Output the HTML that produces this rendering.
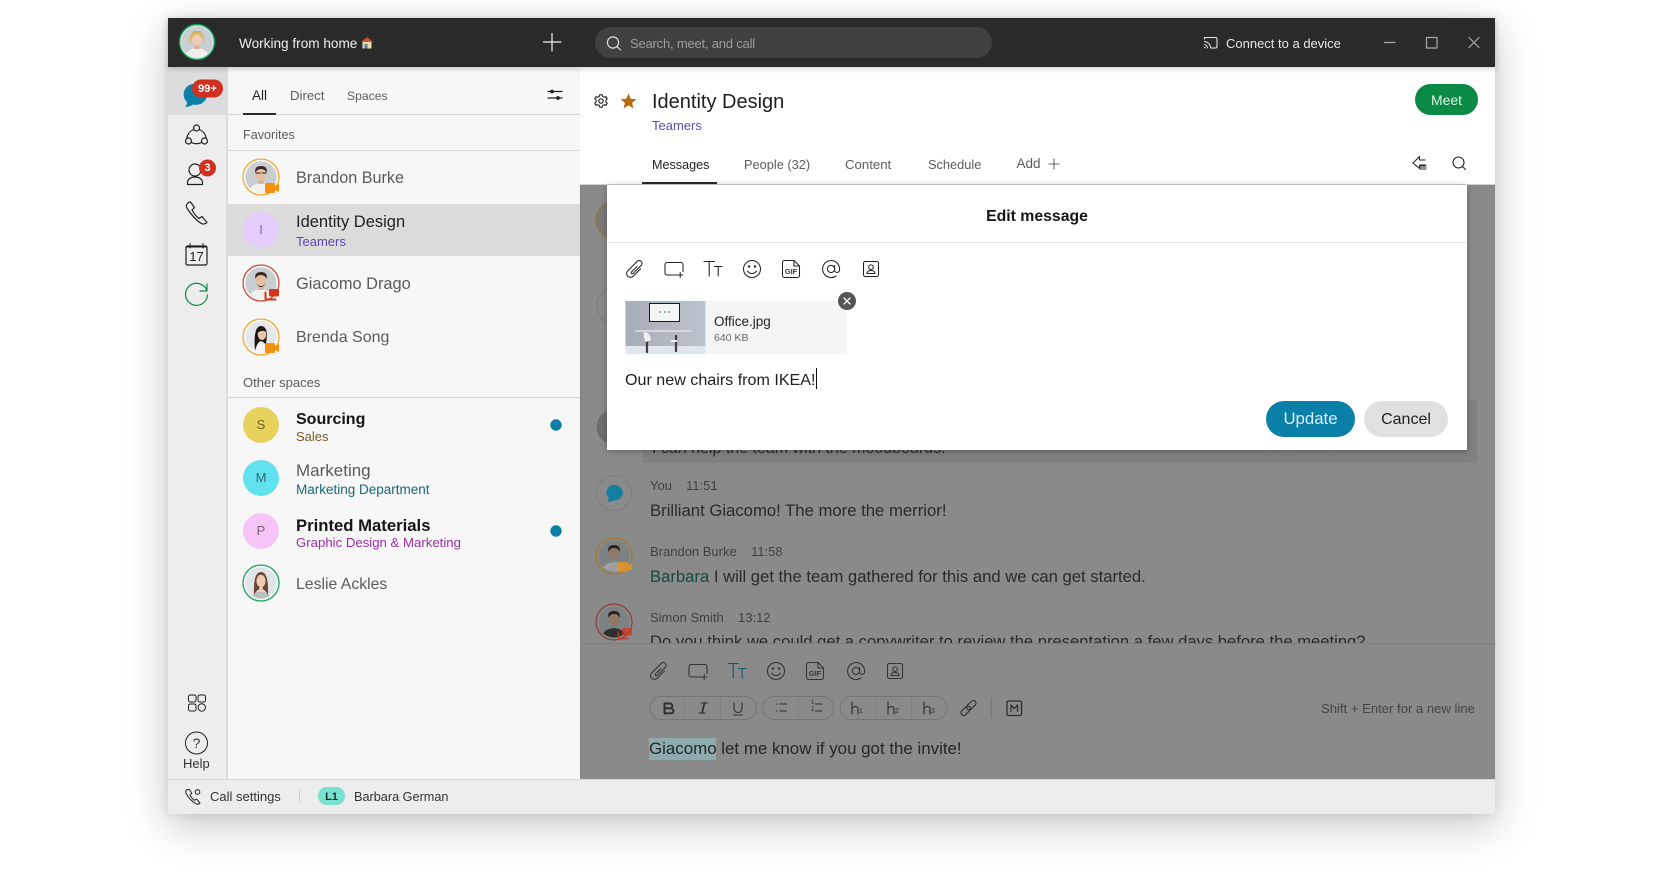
<!DOCTYPE html>
<html><head><meta charset="utf-8"><style>
html,body{margin:0;padding:0;background:#fff;width:1664px;height:880px;overflow:hidden;font-family:"Liberation Sans","DejaVu Sans",sans-serif}
.b{position:absolute}
.t{position:absolute;white-space:nowrap;line-height:20px;height:20px}
svg{position:absolute;left:0;top:0}
</style></head><body>
<div class="b" style="left:168px;top:18px;width:1327px;height:796px;box-shadow:0 12px 40px rgba(0,0,0,.22),0 0 10px rgba(0,0,0,.1)"></div>
<div class="b" style="left:168px;top:66px;width:58px;height:713px;background:#ededed"></div>
<div class="b" style="left:168px;top:66px;width:58px;height:49px;background:#ddd"></div>
<div class="b" style="left:226px;top:66px;width:2px;height:713px;background:#dedede"></div>
<div class="b" style="left:228px;top:66px;width:352px;height:713px;background:#f7f7f7"></div>
<div class="b" style="left:228px;top:114px;width:352px;height:1px;background:#d8d8d8"></div>
<div class="b" style="left:243px;top:113px;width:33px;height:2px;background:#2a2a2a"></div>
<div class="b" style="left:228px;top:150px;width:352px;height:1px;background:#d8d8d8"></div>
<div class="b" style="left:228px;top:204px;width:352px;height:52px;background:#dcdcdc"></div>
<div class="b" style="left:228px;top:397px;width:352px;height:1px;background:#d8d8d8"></div>
<div class="b" style="left:580px;top:66px;width:915px;height:119px;background:#fff"></div>
<div class="b" style="left:580px;top:184px;width:915px;height:1px;background:#d0d0d0"></div>
<div class="b" style="left:642px;top:182px;width:75px;height:2px;background:#2a2a2a"></div>
<div class="b" style="left:580px;top:185px;width:915px;height:594px;background:#8a8a8a;border-left:1px solid #848484;box-sizing:border-box"></div>
<div class="b" style="left:643px;top:400px;width:834px;height:63px;background:#808080"></div>
<div class="b" style="left:168px;top:18px;width:1327px;height:48.5px;background:#2a2a2a;box-shadow:0 2px 5px rgba(0,0,0,.18)"></div>
<div class="b" style="left:595px;top:27px;width:397px;height:31px;border-radius:16px;background:#404040"></div>
<div class="b" style="left:168px;top:779px;width:1327px;height:35px;background:#ededed;border-top:1px solid #d8d8d8;box-sizing:border-box"></div>

<!-- title bar text -->
<div class="t" style="left:239px;top:34px;font-size:13.6px;color:#eee">Working from home</div>
<div class="t" style="left:630px;top:34px;font-size:13px;letter-spacing:-.2px;color:#9c9c9c">Search, meet, and call</div>
<div class="t" style="left:1226px;top:34px;font-size:13px;color:#e6e6e6">Connect to a device</div>

<!-- list text -->
<div class="t" style="left:252px;top:86px;font-size:13.5px;color:#222">All</div>
<div class="t" style="left:290px;top:86px;font-size:13.2px;color:#5c5c5c">Direct</div>
<div class="t" style="left:347px;top:86px;font-size:12.2px;color:#5c5c5c">Spaces</div>
<div class="t" style="left:243px;top:125px;font-size:12.6px;color:#5a5a5a">Favorites</div>
<div class="t" style="left:296px;top:168px;font-size:16.2px;color:#5a5a5a">Brandon Burke</div>
<div class="t" style="left:296px;top:212px;font-size:16.5px;color:#222">Identity Design</div>
<div class="t" style="left:296px;top:232px;font-size:13px;color:#6048b8">Teamers</div>
<div class="t" style="left:296px;top:274px;font-size:16.4px;color:#5a5a5a">Giacomo Drago</div>
<div class="t" style="left:296px;top:328px;font-size:16px;color:#5a5a5a">Brenda Song</div>
<div class="t" style="left:243px;top:373px;font-size:13px;color:#5a5a5a">Other spaces</div>
<div class="t" style="left:296px;top:410px;font-size:16px;font-weight:700;color:#151515">Sourcing</div>
<div class="t" style="left:296px;top:427px;font-size:13px;color:#7a5a20">Sales</div>
<div class="t" style="left:296px;top:461px;font-size:17px;color:#5a5a5a">Marketing</div>
<div class="t" style="left:296px;top:480px;font-size:13.5px;color:#17677a">Marketing Department</div>
<div class="t" style="left:296px;top:516px;font-size:16.7px;font-weight:700;color:#151515">Printed Materials</div>
<div class="t" style="left:296px;top:533px;font-size:13.2px;color:#9a2fa8">Graphic Design &amp; Marketing</div>
<div class="t" style="left:296px;top:575px;font-size:15.8px;color:#5a5a5a">Leslie Ackles</div>
<div class="t" style="left:183px;top:754px;font-size:13px;color:#333">Help</div>
<div class="t" style="left:210px;top:787px;font-size:13px;color:#333">Call settings</div>
<div class="t" style="left:354px;top:787px;font-size:12.7px;color:#333">Barbara German</div>
<div class="b" style="left:318px;top:787px;width:27px;height:18px;border-radius:9px;background:#78e2cf"></div>
<div class="t" style="left:318px;top:788px;width:27px;text-align:center;font-size:11px;font-weight:700;color:#1c2b28;line-height:19px">L1</div>

<!-- header text -->
<div class="t" style="left:652px;top:92px;font-size:20px;color:#1e1e1e">Identity Design</div>
<div class="t" style="left:652px;top:116px;font-size:13px;color:#6048b8">Teamers</div>
<div class="t" style="left:652px;top:155px;font-size:12.6px;color:#222">Messages</div>
<div class="t" style="left:744px;top:155px;font-size:12.8px;color:#5c5c5c">People (32)</div>
<div class="t" style="left:845px;top:155px;font-size:13.2px;color:#5c5c5c">Content</div>
<div class="t" style="left:928px;top:155px;font-size:12.8px;color:#5c5c5c">Schedule</div>
<div class="t" style="left:1016.5px;top:154px;font-size:13.5px;color:#5c5c5c">Add</div>
<div class="b" style="left:1415px;top:84px;width:63px;height:31px;border-radius:16px;background:#0b8a45"></div>
<div class="t" style="left:1415px;top:90px;width:63px;text-align:center;font-size:14px;color:#d8f3e2">Meet</div>

<!-- messages -->
<div class="t" style="left:652px;top:439px;font-size:16px;color:#2a2a2a">I can help the team with the moodboards.</div>
<div class="t" style="left:650px;top:476px;font-size:13px;color:#404040">You</div>
<div class="t" style="left:686px;top:476px;font-size:13px;color:#404040">11:51</div>
<div class="t" style="left:650px;top:501px;font-size:16.7px;color:#2a2a2a">Brilliant Giacomo! The more the merrior!</div>
<div class="t" style="left:650px;top:542px;font-size:13px;color:#404040">Brandon Burke</div>
<div class="t" style="left:751px;top:542px;font-size:13px;color:#404040">11:58</div>
<div class="t" style="left:650px;top:567px;font-size:16.65px;color:#2a2a2a"><span style="color:#14493d">Barbara</span> I will get the team gathered for this and we can get started.</div>
<div class="t" style="left:650px;top:608px;font-size:13px;color:#404040">Simon Smith</div>
<div class="t" style="left:738px;top:608px;font-size:13px;color:#404040">13:12</div>
<div class="t" style="left:650px;top:632px;font-size:16.62px;color:#2a2a2a">Do you think we could get a copywriter to review the presentation a few days before the meeting?</div>

<!-- avatars behind in messages + compose -->
<svg width="1664" height="880" viewBox="0 0 1664 880">
<defs>
<clipPath id="c"><circle r="15.6"/></clipPath>
<g id="fm"><circle r="15.6" fill="#c9ced2"/><g clip-path="url(#c)"><path d="M-13 16Q-11 7 0 6Q11 7 13 16Z" fill="#f0f0ee"/><rect x="-2.5" y="1" width="5" height="6" fill="#d9b094"/><ellipse cy="-3" rx="5.4" ry="7" fill="#e4bfa4"/><path d="M-5.6 -4Q-7 -11 0 -11Q7 -11 5.6 -4Q4 -8 0 -8Q-4 -8 -5.6 -4Z" fill="#3b2b22"/></g></g>
<g id="cam"><rect x="4" y="6" width="10" height="10" rx="1.5" fill="#f7920f"/><path d="M14 9l4-2v8l-4-2z" fill="#f7920f"/></g>
<g id="shr"><rect x="8" y="6" width="10" height="7.5" rx="1.2" fill="#d4351c"/><path d="M4.500 9.500v6a1 1 0 0 0 1 1h9" fill="none" stroke="#d4351c" stroke-width="2"/></g>
</defs>
<!-- behind modal -->
<circle cx="614" cy="220" r="18" fill="#7a7a7a" stroke="#94733a" stroke-width="1.2"/>
<circle cx="614" cy="306" r="17.500" fill="none" stroke="#7c7c7c"/>
<circle cx="614" cy="427" r="17.500" fill="#6e6e6e"/>
<g transform="translate(614,493)"><circle r="17.500" fill="#8a8a8a" stroke="#7c7c7c"/><path d="M0 -8a8 7.500 0 0 1 1 15.500c-2 0-5 1.500-7.500 1.500c1-1.500 1.500-3 1-4.500a8 7.500 0 0 1 5.500-12.500z" fill="#127f9e"/></g>
<g transform="translate(614,556)"><circle r="15.600" fill="#7d8285"/><g clip-path="url(#c)"><path d="M-13 16Q-11 7 0 6Q11 7 13 16Z" fill="#a0a0a0"/><ellipse cy="-3" rx="5.400" ry="7" fill="#8f7a6a"/><path d="M-5.600 -4Q-7 -11 0 -11Q7 -11 5.600 -4Q4 -8 0 -8Q-4 -8 -5.600 -4Z" fill="#2a211b"/></g><circle r="18" fill="none" stroke="#a87a23" stroke-width="1.200"/><use href="#cam" opacity=".75"/></g>
<g transform="translate(614,622)"><circle r="15.600" fill="#7d8285"/><g clip-path="url(#c)"><path d="M-13 16Q-11 7 0 6Q11 7 13 16Z" fill="#2f2f2f"/><ellipse cy="-3" rx="5.400" ry="7" fill="#8f7a6a"/><path d="M-5.600 -4Q-7 -11 0 -11Q7 -11 5.600 -4Q4 -8 0 -8Q-4 -8 -5.600 -4Z" fill="#2a211b"/></g><circle r="18" fill="none" stroke="#8e3b30" stroke-width="1.200"/><use href="#shr" opacity=".75"/></g>
</svg>

<div class="b" style="left:581px;top:643px;width:914px;height:136px;background:#8a8a8a;border-top:1px solid #7e7e7e;box-sizing:border-box"></div>
<div class="b" style="left:649px;top:738px;width:67px;height:22px;background:#8eabb0"></div>
<div class="t" style="left:649px;top:739px;font-size:16.9px;color:#262626">Giacomo <span>let me know if you got the invite!</span></div>
<div class="t" style="left:1321px;top:699px;font-size:13.1px;color:#444">Shift + Enter for a new line</div>

<!-- modal -->
<div class="b" style="left:607px;top:185px;width:860px;height:264.5px;background:#fff;box-shadow:0 1px 6px rgba(0,0,0,.3)"></div>
<div class="b" style="left:607px;top:242px;width:860px;height:1px;background:#e8e8e8"></div>
<div class="t" style="left:607px;top:207px;width:860px;text-align:center;font-size:15.8px;font-weight:700;color:#151515">Edit message</div>
<div class="b" style="left:625px;top:301px;width:222px;height:53px;background:#f5f5f5"></div>
<div class="t" style="left:714px;top:312px;font-size:13.5px;color:#222">Office.jpg</div>
<div class="t" style="left:714px;top:328px;font-size:10.5px;color:#666">640 KB</div>
<div class="t" style="left:625px;top:370px;font-size:16.1px;color:#1e1e1e">Our new chairs from IKEA!</div>
<div class="b" style="left:816px;top:368px;width:1px;height:21px;background:#111"></div>
<div class="b" style="left:1266px;top:401px;width:89px;height:36px;border-radius:18px;background:#0a7fa8"></div>
<div class="t" style="left:1266px;top:409px;width:89px;text-align:center;font-size:16.8px;color:#d6f0f7">Update</div>
<div class="b" style="left:1364px;top:401px;width:84px;height:36px;border-radius:18px;background:#e0e0e0"></div>
<div class="t" style="left:1364px;top:410px;width:84px;text-align:center;font-size:16px;color:#222">Cancel</div>

<!-- icons -->
<svg width="1664" height="880" viewBox="0 0 1664 880" fill="none" stroke-linecap="round" stroke-linejoin="round">
<defs>
<g id="i-clip"><path transform="rotate(45)" d="M3.800 -4V6.500a3.800 3.800 0 0 1-7.600 0V-7a2.800 2.800 0 0 1 5.600 0V4.500a1.100 1.100 0 0 1-2.200 0V-3"/></g>
<g id="i-img"><path d="M3 6H-7a2 2 0 0 1-2-2V-4.500a2 2 0 0 1 2-2H7a2 2 0 0 1 2 2V2.500M6.200 3.500V8.500M3.800 6H8.700"/></g>
<g id="i-tt"><path d="M-9 -7.500H1.500M-3.800 -7.500V7M1.500 -2.500H9M5.200 -2.500V7"/></g>
<g id="i-sm"><circle r="8.500"/><circle cx="-3" cy="-2.500" r=".7" fill="currentColor"/><circle cx="3" cy="-2.500" r=".7" fill="currentColor"/><path d="M-4.500 2.200Q0 6.800 4.500 2.200"/></g>
<g id="i-gif"><path d="M-8.500 -6.500a2 2 0 0 1 2-2H3L8.500 -3V6.500a2 2 0 0 1-2 2H-6.500a2 2 0 0 1-2-2ZM3 -8.500V-3H8.500"/></g>
<g id="i-at"><circle cy="0" r="3.600"/><path d="M3.600 -3.500V1a2.500 2.500 0 0 0 5 0V0a8.500 8.500 0 1 0-3.500 6.900"/></g>
<g id="i-ct"><rect x="-7.500" y="-7.500" width="15" height="15" rx="1.800"/><circle cy="-1.800" r="2.300"/><path d="M-4 4.500c0-2.200 1.500-3 4-3s4 .8 4 3Z"/></g>
</defs>

<!-- title bar -->
<circle cx="197" cy="42" r="17.500" fill="#dfe3e5" stroke="#0c9a52" stroke-width="1.400"/>
<g transform="translate(197,42)"><use href="#fm"/><ellipse cy="-3" rx="5.300" ry="6.800" fill="#f0ccb4"/><path d="M-7 2Q-8.500 -11 0 -11Q8.500 -11 7 2Q5.500 -7 0 -7.500Q-5.500 -7 -7 2Z" fill="#dbb664"/></g>
<g transform="translate(367,43)"><path d="M-6 -1L0 -6L6 -1Z" fill="#c9572c"/><rect x="-4.500" y="-1" width="9" height="6.500" fill="#f0d9b0"/><rect x="-2.500" y="1" width="3" height="4.500" fill="#5f7f8f"/></g>
<path d="M552 33.500V51M543.500 42H561" stroke="#eee" stroke-width="1.200"/>
<circle cx="613" cy="42.500" r="5.600" stroke="#ddd" stroke-width="1.200"/><path d="M617 46.500L620.500 50" stroke="#ddd" stroke-width="1.200"/>
<path d="M1204.500 37.500V39a1.500 1.500 0 0 1 1.500-1.500H1215.500a1.500 1.500 0 0 1 1.500 1.500V46.500a1.500 1.500 0 0 1-1.500 1.500H1211" stroke="#e6e6e6" stroke-width="1.100"/>
<path d="M1204.500 41.500a6.500 6.500 0 0 1 6 6.500M1204.500 44.500a3.500 3.500 0 0 1 3 3.500" stroke="#e6e6e6" stroke-width="1"/><circle cx="1205" cy="47.500" r=".8" fill="#e6e6e6"/>
<path d="M1384.500 42.500H1395" stroke="#aaa" stroke-width="1.200"/>
<rect x="1426.500" y="37.500" width="10.500" height="10.500" stroke="#aaa" stroke-width="1.200"/>
<path d="M1469 37.500L1479 47.500M1479 37.500L1469 47.500" stroke="#aaa" stroke-width="1.200"/>

<!-- rail -->
<path d="M196 84c6.500 0 11 4.600 11 10.400s-4.500 10.400-11 10.400c-1 0-2 0-3-.3c-2 1.600-5 2.500-8 2.300c1.500-1.300 2.200-3 2-4.800a10.500 10.500 0 0 1 9-18z" fill="#0a7fa8"/>
<rect x="192" y="79.500" width="31" height="18" rx="9" fill="#cf3020"/>
<g stroke="#1f1f1f" stroke-width="1.200">
<circle cx="196.500" cy="128" r="3"/><circle cx="188.500" cy="141" r="3"/><circle cx="204.500" cy="141" r="3"/>
<path d="M193.800 129.500a11 11 0 0 0-7 8.800M199.200 129.500a11 11 0 0 1 7 8.800M191.500 142.500a11 11 0 0 0 10 0"/>
<circle cx="195" cy="170" r="6"/><path d="M187.500 184.500v-2c0-3 3-5.500 7.500-5.500s7.500 2.500 7.500 5.500v2Z"/>
<path d="M187.500 204.500c-1.500 1.500-1.500 3.500 0 5.500 4 6 8 10.500 13 14c2 1.500 4.500 1.500 6.500-.5l-5-6-3 2c-3-2-5-5-7-8.500l2.500-2.500-4-5.500c-1 0-2 0-3 1.500z" transform="translate(0,-1)"/>
<rect x="186" y="246" width="21" height="19" rx="1.500"/><path d="M190 243.500V248M203 243.500V248M186 247H207" stroke-width="1"/>
<g stroke-width="1"><rect x="188.500" y="695" width="7.500" height="7" rx="1.800"/><rect x="198" y="695" width="7.500" height="7" rx="1.800"/><rect x="188.500" y="704" width="7.500" height="7" rx="1.800"/><circle cx="201.800" cy="707.500" r="3.700"/></g>
<circle cx="196.500" cy="743" r="11" stroke-width="1"/>
</g>
<path d="M207 284V291H200M207 291a11 11 0 1 0 .5 4" stroke="#0c8a4a" stroke-width="1.200"/>
<circle cx="207.500" cy="168" r="8.500" fill="#cf3020"/>
<path d="M186.500 790c-1 1-1 2.500 0 4 2 4 5 7 9 9.500 1.500 1 3 1 4.500-.5l-3.500-4-2 1.300c-2-1.300-3.300-3-4.500-5.500l1.800-1.800-2.500-3.500c-1 0-1.700 0-2.300.5z" stroke="#222" stroke-width="1"/>
<circle cx="197.500" cy="792" r="2.300" stroke="#222" stroke-width="1" stroke-dasharray="1.500 .8"/>
<path d="M299.500 791V802" stroke="#ccc"/>

<!-- list icons -->
<g stroke="#222" stroke-width="1.200"><path d="M548 91.500H562M548 98H562"/><circle cx="552" cy="91.500" r="1.300" fill="#222"/><circle cx="558" cy="98" r="1.300" fill="#222"/></g>

<!-- list avatars -->
<g transform="translate(261,177)"><use href="#fm"/><path d="M-5 -4H-1M1 -4H5" stroke="#222"/><circle r="18" stroke="#f0a92e" stroke-width="1.300"/><use href="#cam"/></g>
<circle cx="261" cy="230" r="18" fill="#e4cdfa"/>
<g transform="translate(261,283)"><use href="#fm"/><path d="M-5.200 0Q0 8 5.200 0Q3 3 0 3Q-3 3-5.200 0Z" fill="#3b2b22"/><circle r="18" stroke="#cc4a38" stroke-width="1.300"/><use href="#shr"/></g>
<g transform="translate(261,337)"><circle r="15.600" fill="#e6e7e8"/><g clip-path="url(#c)"><path d="M-10 16Q-8 8 0 7Q8 8 10 16Z" fill="#f4f4f2"/><path d="M-6 14Q-8 -11 0 -11Q5 -11 6 -3L5 8Q-2 -2 -6 14Z" fill="#1b1512"/><ellipse cx="1" cy="-3" rx="4.300" ry="6" fill="#eac7ae"/><path d="M-3.500 -4Q-3 -9 1 -9Q5 -9 5.400 -5Q1 -8-3.500 -4Z" fill="#1b1512"/></g><circle r="18" stroke="#f0a92e" stroke-width="1.300"/><use href="#cam"/></g>
<circle cx="261" cy="425" r="18" fill="#e8d25e"/>
<circle cx="261" cy="478" r="18" fill="#62e1ee"/>
<circle cx="261" cy="531" r="18" fill="#f7c4f7"/>
<g transform="translate(261,583)"><circle r="15.600" fill="#dfe5e8"/><g clip-path="url(#c)"><path d="M-10 16Q-8 9 0 8Q8 9 10 16Z" fill="#b8c0b8"/><path d="M-7 12Q-8 -11 0 -11Q8 -11 7 12Q4 6 0 6Q-4 6-7 12Z" fill="#6b4632"/><ellipse cy="-2" rx="4.600" ry="6.200" fill="#eecbb4"/><path d="M-1.700 4H1.700V9H-1.700Z" fill="#eecbb4"/></g><circle r="18" stroke="#1ea35c" stroke-width="1.300"/></g>
<circle cx="556" cy="425" r="5.700" fill="#0a7fa8"/>
<circle cx="556" cy="531" r="5.700" fill="#0a7fa8"/>

<!-- header icons -->
<g stroke="#222" stroke-width="1.100" transform="translate(601,101)"><circle r="2.200"/><path d="M-1.200 -6.200H1.200L1.700 -4.500L3.300 -3.700L5 -4.300L6.200 -2.200L4.900 -1V1L6.200 2.200L5 4.300L3.300 3.700L1.700 4.500L1.200 6.200H-1.200L-1.700 4.500L-3.300 3.700L-5 4.300L-6.200 2.200L-4.900 1V-1L-6.200 -2.200L-5 -4.300L-3.300 -3.700L-1.700 -4.500Z"/></g>
<path d="M628.500 93.500l2.200 5.200 5.700.5-4.300 3.700 1.300 5.500-4.900-3-4.900 3 1.300-5.500-4.300-3.700 5.700-.5z" fill="#b86a0e"/>
<path d="M1054 159V169M1049 164H1059" stroke="#666" stroke-width="1.100"/>
<g stroke="#222" stroke-width="1.100"><path d="M1419.500 156.500L1413 163L1419.500 168.500V165.500H1425M1419.500 156.500V160H1425"/><path d="M1420 165H1426M1420 167H1426M1420 169H1426"/></g>
<circle cx="1458.500" cy="162.500" r="5.500" stroke="#222" stroke-width="1.100"/><path d="M1462.500 166.500L1465.500 169.500" stroke="#222" stroke-width="1.100"/>

<!-- modal toolbar -->
<g stroke="#222" stroke-width="1.050" color="#222">
<use href="#i-clip" x="635" y="269"/><use href="#i-img" x="674" y="269"/><use href="#i-tt" x="713" y="269"/><use href="#i-sm" x="752" y="269"/><use href="#i-gif" x="791" y="269"/><use href="#i-at" x="831" y="269"/><use href="#i-ct" x="871" y="269"/>
</g>
<text x="791" y="274" font-size="7.500" font-family="Liberation Sans" font-weight="700" fill="#333" text-anchor="middle">GIF</text>

<!-- thumbnail -->
<defs><linearGradient id="g" x1="0" y1="0" x2="1" y2="0"><stop offset="0" stop-color="#a6adb8"/><stop offset="1" stop-color="#bcc3cc"/></linearGradient></defs>
<rect x="625.500" y="301" width="80" height="53" fill="url(#g)"/>
<rect x="625.500" y="346" width="80" height="8" fill="#dfe6ee"/>
<rect x="649.500" y="303.500" width="30" height="18" fill="#f3f6f5" stroke="#1a1a1a" stroke-width="1"/>
<circle cx="660" cy="312" r="1" fill="#e87a6a"/><circle cx="665" cy="312" r="1" fill="#5fc08e"/><circle cx="669" cy="312" r="1" fill="#5aa8d8"/>
<path d="M636 331H691" stroke="#dfe3e6" stroke-width="1.500"/>
<path d="M676 336V351M647 338V352" stroke="#3a3f46" stroke-width="2.200"/>
<path d="M644 332q6 0 7 8l-5 2q-3-4-2-10z" fill="#eef1f4"/><path d="M671 340h6v2h-6z" fill="#eef1f4"/>
<circle cx="847" cy="301" r="9" fill="#555"/><path d="M844 298L850 304M850 298L844 304" stroke="#fff" stroke-width="1.300"/>

<!-- compose toolbar -->
<g stroke="#333" stroke-width="1.050" color="#333">
<use href="#i-clip" x="659" y="671"/><use href="#i-img" x="698" y="671"/><use href="#i-sm" x="776" y="671"/><use href="#i-gif" x="815" y="671"/><use href="#i-at" x="856" y="671"/><use href="#i-ct" x="895" y="671"/>
</g>
<use href="#i-tt" x="737" y="671" stroke="#15596c" stroke-width="1.100"/>
<text x="815" y="676" font-size="7.500" font-family="Liberation Sans" font-weight="700" fill="#3a3a3a" text-anchor="middle">GIF</text>

<g stroke="#757575" stroke-width="1">
<rect x="649.500" y="696.500" width="107" height="23" rx="11.500"/>
<rect x="762.500" y="696.500" width="71" height="23" rx="11.500"/>
<rect x="840" y="696.500" width="107" height="23" rx="11.500"/>
<path d="M991 698V718" stroke-width="1.300"/>
</g>
<path d="M685 697V719M720.500 697V719M798 697V719M875.500 697V719M911.500 697V719" stroke="#808080" stroke-width="1"/>
<g stroke="#2e2e2e" stroke-width="1.100">
<path d="M664.500 703.500H670a2.300 2.300 0 0 1 0 4.800H664.500ZM664.500 708.300H671a2.500 2.500 0 0 1 0 5H664.500Z" stroke-width="1.900"/>
<path d="M704.500 703L702 713" stroke-width="1.600"/><path d="M701 703H707.500M699 713H705" stroke-width="1"/>
<path d="M734 703V708.500a4 4 0 0 0 8 0V703M733.500 715H742.500"/>
<path d="M776.500 704H777M776.500 711H777M780 704H786.500M780 711H786.500"/>
<path d="M815.500 704H822M815.500 711H822"/>
<path d="M852 702V714M852 708q4-3 6 0V714"/><path d="M888 702V714M888 708q4-3 6 0V714"/><path d="M924 702V714M924 708q4-3 6 0V714"/>
<g transform="translate(968.500,708) rotate(-45)"><rect x="-9.500" y="-2.700" width="11" height="5.400" rx="2.700"/><rect x="-1.500" y="-2.700" width="11" height="5.400" rx="2.700"/></g>
<rect x="1007" y="701" width="14.500" height="14.500" rx="1.500" stroke-width="1.300"/><path d="M1011 711.500V705L1014.300 708.500L1017.500 705V711.500" stroke-width="1.300"/>
</g>
</svg>

<!-- overlay text on icons -->
<div class="t" style="left:192px;top:79px;width:31px;text-align:center;font-size:11px;font-weight:700;color:#fff">99+</div>
<div class="t" style="left:199px;top:158px;width:17px;text-align:center;font-size:11px;font-weight:700;color:#fff">3</div>
<div class="t" style="left:186px;top:246px;width:21px;text-align:center;font-size:13px;color:#222;line-height:21px">17</div>
<div class="t" style="left:186px;top:733px;width:21px;text-align:center;font-size:14px;color:#333">?</div>
<div class="t" style="left:243px;top:220px;width:36px;text-align:center;font-size:13px;color:#7c7290">I</div>
<div class="t" style="left:243px;top:415px;width:36px;text-align:center;font-size:13px;color:#6e6426">S</div>
<div class="t" style="left:243px;top:468px;width:36px;text-align:center;font-size:13px;color:#2f6a72">M</div>
<div class="t" style="left:243px;top:521px;width:36px;text-align:center;font-size:13px;color:#7a5c7a">P</div>
<div class="t" style="left:811px;top:700px;font-size:6px;color:#2e2e2e;line-height:7px;height:14px">1<br>2</div>
<div class="t" style="left:859px;top:708px;font-size:7px;color:#2e2e2e;line-height:8px;height:8px">1</div>
<div class="t" style="left:895px;top:708px;font-size:7px;color:#2e2e2e;line-height:8px;height:8px">2</div>
<div class="t" style="left:931px;top:708px;font-size:7px;color:#2e2e2e;line-height:8px;height:8px">3</div>
</body></html>
